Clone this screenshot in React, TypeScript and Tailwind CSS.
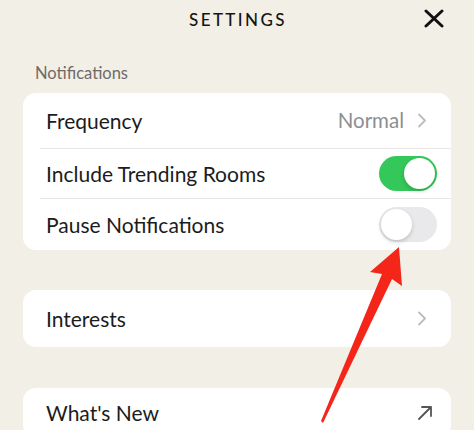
const font = { fontFamily: 'Lato, "Open Sans", sans-serif' }

function Toggle({ on }: { on: boolean }) {
  return (
    <div
      className={`relative w-[58px] h-[35px] rounded-full ${on ? 'bg-[#34c759]' : 'bg-[#e9e9eb]'}`}
    >
      <div
        className={`absolute top-[2px] w-[31px] h-[31px] rounded-full bg-white shadow-[0_2px_4px_rgba(0,0,0,0.18)] ${
          on ? 'right-[2px]' : 'left-[2px]'
        }`}
      />
    </div>
  )
}

function Chevron() {
  return (
    <svg className="mr-[24px]" width="10" height="15" viewBox="0 0 10 15" fill="none" stroke="#bcbcbf" strokeWidth="1.8" strokeLinecap="round" strokeLinejoin="round">
      <path d="M2 1.5 L8 7.5 L2 13.5" />
    </svg>
  )
}

function Row({
  label,
  right,
  divider,
  height,
}: {
  label: string
  right?: React.ReactNode
  divider?: boolean
  height: string
}) {
  return (
    <div className={`relative flex items-center justify-between pl-[23px] ${height}`}>
      <span className="text-[21px] text-[#1c1c1c]">{label}</span>
      {right}
      {divider && <div className="absolute left-[17px] right-0 bottom-0 h-px bg-[#e6e6e6]" />}
    </div>
  )
}

export default function App() {
  return (
    <div className="relative w-[474px] h-[430px] overflow-hidden bg-[#f2efe6]" style={font}>
      {/* header */}
      <div className="relative h-[40px] flex items-center justify-center">
        <h1 className="text-[17px] font-medium tracking-[2.4px] text-[#151515] pl-[2px]">SETTINGS</h1>
        <svg
          className="absolute right-[30px] top-[9px]"
          width="20"
          height="19"
          viewBox="0 0 20 19"
          fill="none"
          stroke="#111"
          strokeWidth="3"
          strokeLinecap="round"
        >
          <path d="M2 2 L18 17 M18 2 L2 17" />
        </svg>
      </div>

      <div className="px-[23px]">
        <p className="mt-[21px] mb-[7px] pl-[12px] text-[16.5px] text-[#6e6b66]">Notifications</p>

        <div className="bg-white rounded-[13px]">
          <Row
            label="Frequency"
            height="h-[56px]"
            divider
            right={
              <div className="flex items-center">
                <span className="text-[20.5px] text-[#8e8e91] mr-[13px]">Normal</span>
                <Chevron />
              </div>
            }
          />
          <Row
            label="Include Trending Rooms"
            height="h-[50px]"
            divider
            right={<div className="mr-[14px]"><Toggle on /></div>}
          />
          <Row
            label="Pause Notifications"
            height="h-[51px]"
            right={<div className="mr-[14px]"><Toggle on={false} /></div>}
          />
        </div>

        <div className="mt-[40px] bg-white rounded-[13px]">
          <Row label="Interests" height="h-[57px]" right={<Chevron />} />
        </div>

        <div className="mt-[41px] bg-white rounded-[13px]">
          <Row
            label="What's New"
            height="h-[50px]"
            right={
              <svg className="mr-[18px]" width="16" height="16" viewBox="0 0 16 16" fill="none" stroke="#555" strokeWidth="1.8" strokeLinecap="round" strokeLinejoin="round">
                <path d="M2 14 L14 2 M5 2 H14 V11" />
              </svg>
            }
          />
        </div>
      </div>

      {/* red pointer arrow */}
      <svg className="absolute left-0 top-0 pointer-events-none" width="474" height="430" viewBox="0 0 474 430">
        <polygon
          points="399,247 402,286 392,279 323,423 321,421 382,274 370,272"
          fill="#f4261a"
        />
      </svg>
    </div>
  )
}
